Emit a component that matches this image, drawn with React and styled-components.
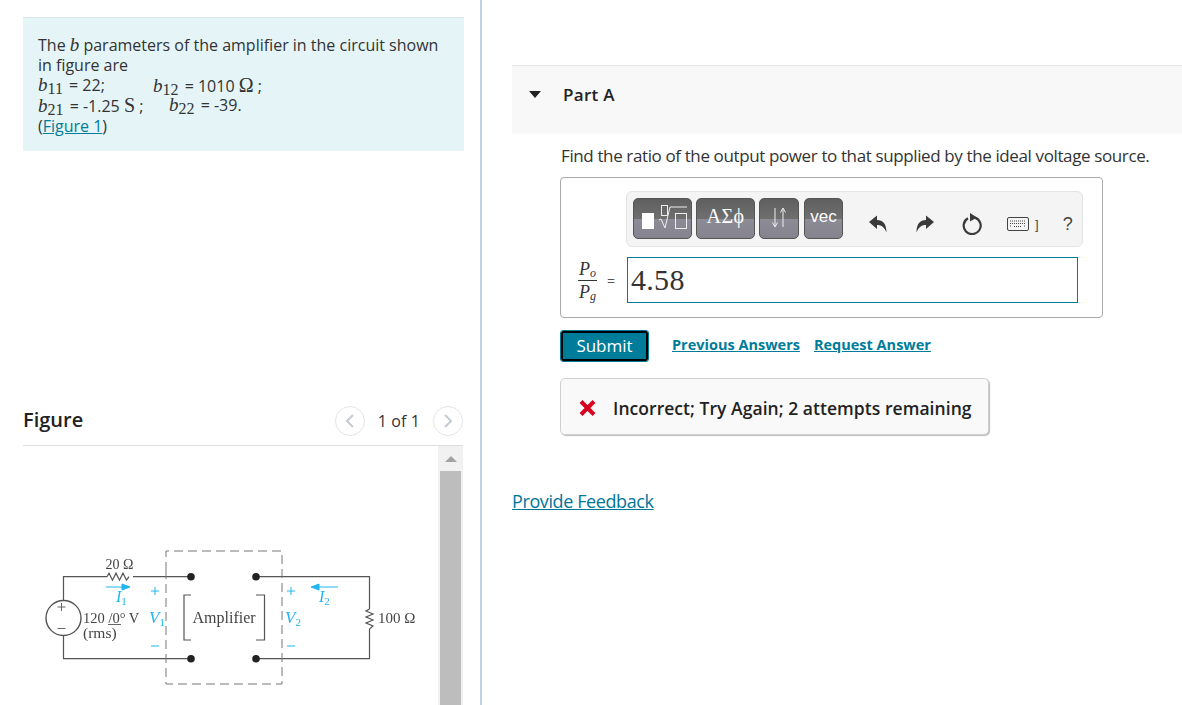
import React from 'react'
import styled, { createGlobalStyle } from 'styled-components'

const Global = createGlobalStyle`
  html, body { margin:0; padding:0; height:705px; overflow:hidden; background:#fff; }
  body { font-family:"Open Sans","Liberation Sans",sans-serif; color:#333; }
`

const teal = '#007c9b'

const Page = styled.div`
  display:flex;
  width:1182px;
  height:705px;
  overflow:hidden;
`

const LeftPane = styled.div`
  flex:none;
  width:457px;
  padding:17px 0 0 23px;
  border-right:2px solid #bdd0e4;
`

const Intro = styled.div`
  width:441px;
  height:134px;
  box-sizing:border-box;
  background:#e5f5f7;
  border-top:1px solid #d9e6e8;
  padding:17px 15px 0;
  font-size:16px;
  line-height:20px;
`

const MathRow = styled.div`
  display:flex;
  height:20px;
`

const Term = styled.span`
  width:${p => p.$w}px;
  flex:none;
  white-space:nowrap;
`

const Var = styled.i`
  font-family:"Liberation Serif",serif;
  font-size:19px;
`

const Sub = styled.sub`
  font-family:"Liberation Serif",serif;
  font-size:16px;
  line-height:0;
  font-style:normal;
  vertical-align:-3px;
  margin-right:2px;
`

const Unit = styled.span`
  font-family:"Liberation Serif",serif;
  font-size:20px;
`

const FigureRef = styled.div`
  margin-top:1px;
`

const Link = styled.a`
  color:${teal};
  text-decoration:underline;
`

const FigureHead = styled.div`
  width:440px;
  height:47px;
  margin-top:248px;
  display:flex;
  align-items:center;
  justify-content:space-between;
  box-sizing:border-box;
  border-bottom:1px solid #ddd;
  padding-bottom:6px;
`

const FigureTitle = styled.h2`
  margin:0;
  font-size:20px;
  font-weight:600;
  color:#222;
`

const Pager = styled.div`
  display:flex;
  align-items:center;
  gap:13px;
  margin:4px 0 0;
  font-size:16px;
  letter-spacing:0.1px;
`

const PagerButton = styled.span`
  width:30px;
  height:30px;
  box-sizing:border-box;
  border:1px solid #e4e4e4;
  border-radius:50%;
  display:flex;
  align-items:center;
  justify-content:center;
`

const FigureBody = styled.div`
  display:flex;
  width:440px;
  height:260px;
`

const Drawing = styled.svg`
  width:415px;
  height:260px;
  flex:none;
  filter:blur(0.35px);
`

const ScrollTrack = styled.div`
  width:25px;
  flex:none;
  background:#f1f1f1;
  display:flex;
  flex-direction:column;
  align-items:flex-start;
`

const ScrollUp = styled.div`
  width:21px;
  height:25px;
  display:flex;
  align-items:center;
  justify-content:center;
  margin-left:2px;

  &::before{
    content:'';
    border-left:6px solid transparent;
    border-right:6px solid transparent;
    border-bottom:6px solid #a3a3a3;
  }
`

const ScrollThumb = styled.div`
  width:21px;
  flex:1;
  margin-left:2px;
  background:#bdbdbd;
`

const RightPane = styled.div`
  flex:1;
  padding:65px 0 0 30px;
`

const PartBar = styled.div`
  height:69px;
  box-sizing:border-box;
  background:#f8f8f8;
  border-top:1px solid #e6e6e6;
  display:flex;
  align-items:center;
  padding-left:17px;
  padding-bottom:11px;
`

const Caret = styled.span`
  border-left:6.5px solid transparent;
  border-right:6.5px solid transparent;
  border-top:7px solid #222;
`

const PartTitle = styled.h3`
  margin:0 0 0 22px;
  font-size:17px;
  font-weight:600;
  color:#222;
  letter-spacing:0.3px;
`

const Body = styled.div`
  padding:10px 0 0 48px;
`

const Prompt = styled.p`
  margin:0 0 0 1px;
  font-size:17px;
  line-height:24px;
  letter-spacing:-0.38px;
  white-space:nowrap;
`

const AnswerBox = styled.div`
  width:543px;
  height:141px;
  box-sizing:border-box;
  margin-top:9px;
  border:1px solid #aaa;
  border-radius:4px;
  padding:13px 19px 0 17px;
`

const Toolbar = styled.div`
  width:457px;
  height:56px;
  box-sizing:border-box;
  margin-left:48px;
  background:#f4f4f4;
  border:1px solid #e4e4e4;
  border-radius:6px;
  display:flex;
  align-items:flex-start;
  padding:6px 0 0 6px;
`

const ToolButton = styled.span`
  width:${p => p.$w}px;
  height:41px;
  margin-right:${p => p.$gap}px;
  flex:none;
  box-sizing:border-box;
  border:1px solid #555;
  border-radius:5px;
  background:linear-gradient(#5f5f5f 0,#6f6f6f 50%,#8d8b96 50%,#85838e 100%);
  color:#fff;
  display:flex;
  align-items:center;
  justify-content:center;
  padding-bottom:${p => p.$pb || 0}px;
  font-family:${p => (p.$serif ? '"Liberation Serif",serif' : '"Liberation Sans",sans-serif')};
  font-size:${p => p.$size || 16}px;
  letter-spacing:${p => p.$track || 0}px;
`

const Tools = styled.div`
  display:flex;
  align-items:center;
  height:48px;
  box-sizing:border-box;
  padding-top:4px;
  margin-left:26px;
`

const ToolIcon = styled.svg`
  flex:none;
  margin-right:${p => p.$gap}px;
  display:block;
`

const Help = styled.span`
  font-family:"Liberation Sans",sans-serif;
  font-size:18px;
  color:#444;
`

const Bracket = styled.span`
  font-family:"Liberation Sans",sans-serif;
  font-size:13px;
  color:#444;
  margin:0 24px 0 6px;
`

const EquationRow = styled.div`
  display:flex;
  align-items:center;
  margin-top:10px;
`

const Fraction = styled.span`
  display:flex;
  flex-direction:column;
  align-items:center;
  width:19px;
  font-family:"Liberation Serif",serif;
  font-style:italic;
  font-size:18px;
  line-height:22px;
  color:#333;
`

const Numerator = styled.span`
  border-bottom:1px solid #333;
  width:100%;
  text-align:center;
`

const SmallSub = styled.sub`
  font-size:12px;
  line-height:0;
  vertical-align:-2px;
`

const Equals = styled.span`
  width:28px;
  margin-right:2px;
  text-align:center;
  font-size:14px;
  color:#555;
`

const AnswerInput = styled.div`
  width:451px;
  height:46px;
  box-sizing:border-box;
  border:1px solid ${teal};
  padding-left:3px;
  font-family:"Liberation Serif",serif;
  font-size:30px;
  letter-spacing:0.3px;
  line-height:44px;
  color:#333;
`

const ActionRow = styled.div`
  display:flex;
  align-items:center;
  margin:13px 0 0 1px;
`

const Submit = styled.button`
  width:87px;
  height:30px;
  padding:0 0 2px;
  background:${teal};
  color:#fff;
  border:2px solid #000;
  border-radius:2px;
  outline:1px solid ${teal};
  font-family:"Open Sans",sans-serif;
  font-size:17px;
`

const ActionLink = styled(Link)`
  font-size:14.5px;
  font-weight:700;
  margin:0 0 3px ${p => p.$ml}px;
`

const Feedback = styled.div`
  width:429px;
  height:57px;
  box-sizing:border-box;
  margin-top:17px;
  background:#f9f9f9;
  border:1px solid #d0d0d0;
  border-radius:5px;
  box-shadow:1px 1px 1px #bbb;
  display:flex;
  align-items:center;
  padding:3px 0 0 18px;
`

const FeedbackText = styled.span`
  margin-left:17px;
  font-size:17.5px;
  font-weight:600;
  color:#222;
  letter-spacing:0.05px;
  white-space:nowrap;
`

const Provide = styled(Link)`
  display:block;
  margin:54px 0 0 -48px;
  width:max-content;
  font-size:18px;
  letter-spacing:-0.4px;
  color:#00759a;
`

const Chevron = ({ dir }) => (
  <svg width="10" height="16" viewBox="0 0 10 16" fill="none" stroke="#c3cbd6" strokeWidth="2">
    <path d={dir === 'left' ? 'M8 2 2 8l6 6' : 'M2 2l6 6-6 6'} />
  </svg>
)

const Circuit = () => {
  const wire = '#555'
  const cyan = '#1fb6f2'
  const serif = '"Liberation Serif",serif'
  return (
    <Drawing viewBox="23 446 415 260" xmlns="http://www.w3.org/2000/svg">
      <g fill="none" stroke={wire} strokeWidth="1.2">
        <path d="M63.5 600V576.7H107M133 576.7H191M63.5 636V658.7H191" />
        <path d="M256 576.7H369.5V609M369.5 629V658.7H256" />
        <circle cx="63.5" cy="618" r="17.5" strokeWidth="1.4" />
        <path d="M107 576.7l2-3.5 3.5 7 3.5-7 3.5 7 3.5-7 3.5 7 2.5-3.5" />
        <path d="M369.5 609l-3.5 2 7 3-7 3 7 3-7 3 7 3-3.5 3" />
        <path d="M191 595H184V640H191M256 595H264.5V640H256" />
        <path d="M108 624.5h13" strokeWidth="0.9" />
      </g>
      <path d="M166 571V551H282V684H166V571" fill="none" stroke="#777" strokeWidth="1" strokeDasharray="9 5" />
      <g fill="#222">
        <circle cx="191" cy="576.7" r="3.8" />
        <circle cx="191" cy="658.7" r="3.8" />
        <circle cx="256" cy="576.7" r="3.8" />
        <circle cx="256" cy="658.7" r="3.8" />
      </g>
      <g stroke={cyan} strokeWidth="1" fill={cyan}>
        <path d="M106 587H128" fill="none" />
        <path d="M122 584l8 3-8 3z" />
        <path d="M338 587H315" fill="none" />
        <path d="M319 584l-8 3 8 3z" />
      </g>
      <g fontFamily={serif} fill="#444" fontSize="14">
        <text x="105.5" y="569">20 Ω</text>
        <text x="83" y="623" fontSize="14.5">120 /0° V</text>
        <text x="83" y="638" fontSize="15.5">(rms)</text>
        <text x="192.5" y="623" fontSize="16">Amplifier</text>
        <text x="378" y="623" fontSize="15">100 Ω</text>
      </g>
      <path d="M57.5 607h8M61.5 603v8M57.5 628.5h8" stroke="#666" strokeWidth="1" />
      <g fontFamily={serif} fill={cyan} fontStyle="italic" fontSize="16">
        <text x="116" y="602">I<tspan fontSize="11" dy="3" fontStyle="normal">1</tspan></text>
        <text x="319" y="602">I<tspan fontSize="11" dy="3" fontStyle="normal">2</tspan></text>
        <text x="149" y="623" fontSize="17">V<tspan fontSize="11" dy="3" fontStyle="normal">1</tspan></text>
        <text x="285" y="623" fontSize="17">V<tspan fontSize="11" dy="3" fontStyle="normal">2</tspan></text>
      </g>
      <path d="M151 591h8M155 587v8M151 646h8M287 591h8M291 587v8M287 646h8" stroke={cyan} strokeWidth="1" />
    </Drawing>
  )
}

const FractionIcon = () => (
  <svg width="57" height="39" viewBox="1 1 57 39" fill="none" stroke="#eee" strokeWidth="1">
    <rect x="9" y="15" width="12" height="16" fill="#fff" stroke="none" />
    <rect x="28.5" y="7.5" width="6" height="10" />
    <path d="M26 22l2-1 4 9 5-21h17" />
    <rect x="42.5" y="15.5" width="11" height="15" />
  </svg>
)

const ArrowsIcon = () => (
  <svg width="14" height="21" viewBox="0 0 14 21" fill="none" stroke="#eee" strokeWidth="1">
    <path d="M3 1v18M.5 15.5 3 20l2.5-4.5" />
    <path d="M11 20V2M8.5 5.5 11 1l2.5 4.5" />
  </svg>
)

const App = () => (
  <Page>
    <Global />
    <LeftPane>
      <Intro>
        <div>The <Var>b</Var> parameters of the amplifier in the circuit shown</div>
        <div>in figure are</div>
        <MathRow>
          <Term $w={115}><Var>b</Var><Sub>11</Sub> = 22;</Term>
          <Term $w={200}><Var>b</Var><Sub>12</Sub> = 1010 <Unit>Ω</Unit> ;</Term>
        </MathRow>
        <MathRow>
          <Term $w={131}><Var>b</Var><Sub>21</Sub> = -1.25 <Unit>S</Unit> ;</Term>
          <Term $w={200}><Var>b</Var><Sub>22</Sub> = -39.</Term>
        </MathRow>
        <FigureRef>(<Link>Figure 1</Link>)</FigureRef>
      </Intro>
      <FigureHead>
        <FigureTitle>Figure</FigureTitle>
        <Pager>
          <PagerButton><Chevron dir="left" /></PagerButton>
          <span>1 of 1</span>
          <PagerButton><Chevron dir="right" /></PagerButton>
        </Pager>
      </FigureHead>
      <FigureBody>
        <Circuit />
        <ScrollTrack>
          <ScrollUp />
          <ScrollThumb />
        </ScrollTrack>
      </FigureBody>
    </LeftPane>
    <RightPane>
      <PartBar>
        <Caret />
        <PartTitle>Part A</PartTitle>
      </PartBar>
      <Body>
        <Prompt>Find the ratio of the output power to that supplied by the ideal voltage source.</Prompt>
        <AnswerBox>
          <Toolbar>
            <ToolButton $w={59} $gap={4}><FractionIcon /></ToolButton>
            <ToolButton $w={59} $gap={4} $serif $size={20} $track={0.5} $pb={5}>ΑΣϕ</ToolButton>
            <ToolButton $w={40} $gap={5} $pb={3}><ArrowsIcon /></ToolButton>
            <ToolButton $w={39} $gap={0} $size={17} $pb={3}>vec</ToolButton>
            <Tools>
              <ToolIcon $gap={29} width="18" height="18" viewBox="0 0 18 18" fill="#3a3a3a">
                <path d="M0 7l8-6.5V5c6 0 9.500 4 9.500 12.500C15.500 12.500 13 10 8 10v4z" />
              </ToolIcon>
              <ToolIcon $gap={28} width="18" height="18" viewBox="0 0 18 18" fill="#3a3a3a">
                <path d="M18 7L10 .5V5C4 5 .5 9 .5 17.500 2.500 12.500 5 10 10 10v4z" />
              </ToolIcon>
              <ToolIcon $gap={25} width="20" height="22" viewBox="0 0 20 22" fill="none" stroke="#3a3a3a" strokeWidth="2.2">
                <path d="M6 5.200a8.500 8.500 0 1 0 7-.6" />
                <path d="M8 0l7 4.500-7 4z" fill="#3a3a3a" stroke="none" />
              </ToolIcon>
              <ToolIcon $gap={0} width="22" height="14" viewBox="0 0 22 14" fill="none" stroke="#444" strokeWidth="1">
                <rect x="0.5" y="0.5" width="21" height="13" rx="1.500" />
                <path d="M3 4h16M3 6.500h16M3 9h2M7 9.500h8M17 9h2" strokeDasharray="1 1" />
              </ToolIcon>
              <Bracket>]</Bracket>
              <Help>?</Help>
            </Tools>
          </Toolbar>
          <EquationRow>
            <Fraction>
              <Numerator>P<SmallSub>o</SmallSub></Numerator>
              <span>P<SmallSub>g</SmallSub></span>
            </Fraction>
            <Equals>=</Equals>
            <AnswerInput>4.58</AnswerInput>
          </EquationRow>
        </AnswerBox>
        <ActionRow>
          <Submit>Submit</Submit>
          <ActionLink $ml={24}>Previous Answers</ActionLink>
          <ActionLink $ml={14}>Request Answer</ActionLink>
        </ActionRow>
        <Feedback>
          <svg width="17" height="16" viewBox="0 0 17 16" fill="none" stroke="#d8001f" strokeWidth="4">
            <path d="M2 1.500l13 13M15 1.500l-13 13" />
          </svg>
          <FeedbackText>Incorrect; Try Again; 2 attempts remaining</FeedbackText>
        </Feedback>
        <Provide>Provide Feedback</Provide>
      </Body>
    </RightPane>
  </Page>
)

export default App
